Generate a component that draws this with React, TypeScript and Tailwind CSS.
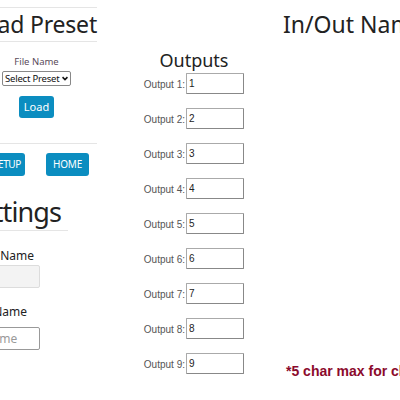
import React from "react";

const outputs = [1, 2, 3, 4, 5, 6, 7, 8, 9];

function Btn({ children }: { children: React.ReactNode }) {
  return (
    <button className="h-[23px] px-[7px] rounded-[3px] bg-[#0b8dc0] text-white text-[10px] tracking-[-0.2px] leading-none">
      {children}
    </button>
  );
}

export default function App() {
  return (
    <div className="w-[400px] h-[400px] overflow-hidden bg-white text-[#222] font-['Noto_Sans',sans-serif] flex">
      {/* left column */}
      <div className="w-[97px] shrink-0 flex flex-col">
        <div className="mt-[7px] border-t border-[#e5e5e5]" />
        <div className="flex justify-end whitespace-nowrap h-[33px] items-center text-[23px] tracking-[-0.2px] leading-none">
          Load Preset
        </div>
        <div className="border-t border-[#e5e5e5]" />
        <div className="w-[73px] flex flex-col items-center mt-[14px]">
          <div className="text-[9.5px] leading-[12px] text-[#5a4a5a]">File Name</div>
          <div className="relative mt-[3px]">
            <select className="block appearance-none w-[69px] h-[15px] text-[9.5px] tracking-[-0.2px] leading-none border border-[#888] rounded-[2px] bg-white pl-[2px] pr-[10px] py-0 text-[#111]">
              <option>Select Preset</option>
            </select>
            <svg
              viewBox="0 0 10 10"
              className="absolute right-[2px] top-[4px] w-[8px] h-[7px] pointer-events-none"
            >
              <path d="M1.5 3 L5 6.5 L8.5 3" fill="none" stroke="#111" strokeWidth="2.2" />
            </svg>
          </div>
          <div className="mt-[7px]">
            <button className="h-[22px] w-[35px] rounded-[3px] bg-[#0b8dc0] text-white text-[11px] leading-none">
              Load
            </button>
          </div>
        </div>
        <div className="mt-[25px] border-t border-[#e5e5e5]" />
        <div className="flex justify-end gap-[21px] mt-[9px] mr-[8px] whitespace-nowrap">
          <button className="h-[23px] pl-[7px] pr-[4px] rounded-[3px] bg-[#0b8dc0] text-white text-[10px] tracking-[-0.4px] leading-none">
            SETUP
          </button>
          <Btn>HOME</Btn>
        </div>
        <div className="w-[68px] flex flex-col">
          <div className="flex justify-end whitespace-nowrap h-[54px] items-end text-[27px] tracking-[-0.9px] leading-none pb-[5px] mr-[7px]">
            Settings
          </div>
          <div className="border-t border-[#e5e5e5]" />
          <div className="flex justify-end whitespace-nowrap mt-[17px] mr-[34px] text-[12px] leading-[15px]">
            Preset Name
          </div>
          <div className="flex justify-end mr-[28px] mt-[2px]">
            <input
              disabled
              className="w-[80px] h-[23px] shrink-0 bg-[#f3f3f3] border border-[#dcdcdc] rounded-[2px]"
            />
          </div>
          <div className="flex justify-end whitespace-nowrap mt-[16px] mr-[41px] text-[12px] leading-[15px]">
            File Name
          </div>
          <div className="flex justify-end mr-[28px] mt-[8px]">
            <input
              placeholder="File Name"
              className="w-[84px] h-[23px] shrink-0 bg-white border border-[#999] rounded-[2px] text-[12px] px-[4px] text-left placeholder:text-[#999]"
            />
          </div>
        </div>
      </div>

      {/* outputs column */}
      <div className="w-[108px] ml-[43px] shrink-0 flex flex-col">
        <div className="text-center text-[18px] leading-none mt-[51px] h-[21px]">Outputs</div>
        <div className="flex flex-col gap-[15px] mt-[1px]">
          {outputs.map((n) => (
            <div key={n} className="flex items-center h-[20px]">
              <label className="w-[46px] shrink-0 text-right pr-[1px] text-[10px] text-[#555] whitespace-nowrap font-['Liberation_Sans',sans-serif] mt-[2px]">
                Output {n}:
              </label>
              <input
                defaultValue={String(n)}
                className="w-[58px] h-[21px] border border-[#aaa] border-r-[#888] border-b-[#888] rounded-[1px] text-[10px] px-[2px] font-['Liberation_Sans',sans-serif] text-[#222]"
              />
            </div>
          ))}
        </div>
      </div>

      {/* names column */}
      <div className="ml-[35px] flex flex-col">
        <div className="whitespace-nowrap text-[23px] leading-none mt-[13px]">In/Out Names</div>
        <div className="mt-[328px] ml-[3px] whitespace-nowrap text-[14px] leading-none font-bold text-[#8b0a2c] font-['Liberation_Sans',sans-serif]">
          *5 char max for channel names
        </div>
      </div>
    </div>
  );
}
